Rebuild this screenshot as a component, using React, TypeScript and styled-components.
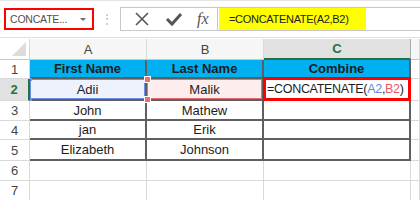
import styled, { createGlobalStyle } from 'styled-components';

const GlobalStyle = createGlobalStyle`
    html, body {
        margin: 0;
        padding: 0;
        background: #ffffff;
        font-family: "Liberation Sans", Arial, sans-serif;
    }
`;

const gridLine = '#d9d9d9';
const tableLine = '#5f5f5f';

type CellKind = 'plain' | 'head' | 'body' | 'sel-a' | 'sel-b' | 'formula';

interface Row {
    num: number;
    height: number;
    cells: [string, string, string];
}

const rows: Row[] = [
    { num: 1, height: 19, cells: ['First Name', 'Last Name', 'Combine'] },
    { num: 2, height: 22, cells: ['Adii', 'Malik', ''] },
    { num: 3, height: 20, cells: ['John', 'Mathew', ''] },
    { num: 4, height: 19, cells: ['jan', 'Erik', ''] },
    { num: 5, height: 21, cells: ['Elizabeth', 'Johnson', ''] },
    { num: 6, height: 20, cells: ['', '', ''] },
    { num: 7, height: 20, cells: ['', '', ''] },
];

function kindsFor(num: number): CellKind[] {
    if (num === 1) return ['head', 'head', 'head'];
    if (num === 2) return ['sel-a', 'sel-b', 'formula'];
    if (num <= 5) return ['body', 'body', 'body'];
    return ['plain', 'plain', 'plain'];
}

export default function App(): JSX.Element {
    return (
        <>
            <GlobalStyle />
            <Page>
                <FormulaRow>
                    <NameBox>
                        <NameText>CONCATE...</NameText>
                        <Caret />
                    </NameBox>
                    <Dots>⋮</Dots>
                    <IconBox>
                        <svg width="18" height="18" viewBox="0 0 18 18">
                            <path d="M3 3 L15 15 M15 3 L3 15" stroke="#555" strokeWidth="1.6" fill="none" />
                        </svg>
                        <svg width="20" height="18" viewBox="0 0 20 18">
                            <path d="M3 9 L8 14 L17 4" stroke="#555" strokeWidth="3" fill="none" />
                        </svg>
                        <Fx>fx</Fx>
                    </IconBox>
                    <FormulaInput>
                        <FormulaText>=CONCATENATE(A2,B2)</FormulaText>
                    </FormulaInput>
                </FormulaRow>

                <Sheet>
                    <HeaderRow>
                        <Corner>
                            <svg width="14" height="14" viewBox="0 0 14 14">
                                <path d="M14 0 L14 14 L0 14 Z" fill="#dcdcdc" />
                            </svg>
                        </Corner>
                        <ColHead>A</ColHead>
                        <ColHead>B</ColHead>
                        <ColHead active>C</ColHead>
                        <ColHead />
                    </HeaderRow>

                    {rows.map((row) => {
                        const kinds = kindsFor(row.num);
                        return (
                            <SheetRow key={row.num} style={{ height: row.height }}>
                                <RowHead active={row.num === 2}>{row.num}</RowHead>
                                {row.cells.map((text, i) => (
                                    <Cell key={i} kind={kinds[i]}>
                                        {kinds[i] === 'formula' ? (
                                            <Formula>
                                                =CONCATENATE(<RefA>A2</RefA>,<RefB>B2</RefB>)
                                            </Formula>
                                        ) : text}
                                        {kinds[i] === 'sel-a' && (
                                            <>
                                                <Tick side="top" />
                                                <Tick side="bottom" />
                                            </>
                                        )}
                                        {kinds[i] === 'sel-b' && (
                                            <>
                                                <Handle side="top" />
                                                <Handle side="bottom" />
                                            </>
                                        )}
                                    </Cell>
                                ))}
                                <Cell kind="plain" />
                            </SheetRow>
                        );
                    })}
                </Sheet>
            </Page>
        </>
    );
}

const Page = styled.div`
    width: 420px;
    height: 200px;
    overflow: hidden;
    background: #ffffff;
    border-top: 1px solid #e4e4e4;
    box-sizing: border-box;
`;

const FormulaRow = styled.div`
    height: 37px;
    display: flex;
    align-items: center;
    padding-left: 4px;
    box-sizing: border-box;
    border-bottom: 1px solid #e0e0e0;
`;

const NameBox = styled.div`
    width: 90px;
    height: 22px;
    border: 2px solid #ff0000;
    box-sizing: border-box;
    display: flex;
    align-items: center;
    justify-content: space-between;
    padding: 0 6px 0 4px;
`;

const NameText = styled.span`
    font-size: 10.5px;
    color: #505050;
    letter-spacing: -0.2px;
`;

const Caret = styled.span`
    width: 0;
    height: 0;
    border-left: 3px solid transparent;
    border-right: 3px solid transparent;
    border-top: 3px solid #6a6a6a;
`;

const Dots = styled.span`
    width: 26px;
    text-align: center;
    color: #b8b8b8;
    font-size: 12px;
`;

const IconBox = styled.div`
    width: 97px;
    height: 24px;
    border: 1px solid #c8c8c8;
    border-right: none;
    box-sizing: border-box;
    display: flex;
    align-items: center;
    justify-content: space-around;
    padding: 0 2px 0 6px;
`;

const Fx = styled.span`
    font-family: "Liberation Serif", "Times New Roman", serif;
    font-style: italic;
    font-size: 16px;
    color: #555;
`;

const FormulaInput = styled.div`
    flex: 1;
    height: 24px;
    border: 1px solid #c8c8c8;
    border-right: none;
    box-sizing: border-box;
    display: flex;
    align-items: stretch;
    padding: 0 0 0 1px;
`;

const FormulaText = styled.span`
    background: #ffff00;
    width: 147px;
    display: flex;
    align-items: center;
    padding-left: 10px;
    box-sizing: border-box;
    font-size: 11px;
    letter-spacing: -0.3px;
    color: #222;
`;

const Sheet = styled.div`
    display: flex;
    flex-direction: column;
    width: 420px;
    padding-top: 1px;
`;

const SheetRow = styled.div`
    display: grid;
    grid-template-columns: 30px 117px 117px 147px 1fr;
    width: 420px;
`;

const HeaderRow = styled(SheetRow)`
    height: 21px;
`;

const Corner = styled.div`
    box-sizing: border-box;
    background: #ffffff;
    border-right: 1px solid ${gridLine};
    border-bottom: 1px solid #c6c6c6;
    display: flex;
    align-items: flex-end;
    justify-content: flex-end;
    padding: 0 3px 3px 0;
`;

const ColHead = styled.div<{ active?: boolean }>`
    box-sizing: border-box;
    background: ${(p) => (p.active ? '#e1e1e1' : '#f6f6f6')};
    border-right: 1px solid ${(p) => (p.active ? '#ababab' : gridLine)};
    border-bottom: ${(p) => (p.active ? '2px solid #217346' : '1px solid #c6c6c6')};
    color: ${(p) => (p.active ? '#217346' : '#444')};
    font-weight: ${(p) => (p.active ? 'bold' : 'normal')};
    font-size: 13px;
    display: flex;
    align-items: center;
    justify-content: center;
`;

const RowHead = styled.div<{ active?: boolean }>`
    box-sizing: border-box;
    background: ${(p) => (p.active ? '#e1e1e1' : '#ffffff')};
    border-right: ${(p) => (p.active ? '2px solid #217346' : `1px solid ${gridLine}`)};
    border-bottom: 1px solid ${gridLine};
    color: ${(p) => (p.active ? '#217346' : '#444')};
    font-weight: ${(p) => (p.active ? 'bold' : 'normal')};
    font-size: 13px;
    display: flex;
    align-items: center;
    justify-content: center;
`;

const cellBg: Record<CellKind, string> = {
    plain: '#ffffff',
    head: '#00b0f0',
    body: '#ffffff',
    'sel-a': '#eef2fc',
    'sel-b': '#fdeded',
    formula: '#ffffff',
};

const Cell = styled.div<{ kind: CellKind }>`
    position: relative;
    box-sizing: border-box;
    background: ${(p) => cellBg[p.kind]};
    border-right: ${(p) => (p.kind === 'plain' ? `1px solid ${gridLine}` : `2px solid ${tableLine}`)};
    border-bottom: ${(p) => (p.kind === 'plain' ? `1px solid ${gridLine}` : `2px solid ${tableLine}`)};
    box-shadow: ${(p) =>
        p.kind === 'sel-a' ? 'inset 0 0 0 1px #6d8fe8'
            : p.kind === 'sel-b' ? 'inset 0 0 0 1px #ec6f76'
                : 'none'};
    font-size: 13px;
    font-weight: ${(p) => (p.kind === 'head' ? 'bold' : 'normal')};
    color: #1c1c1c;
    display: flex;
    align-items: center;
    justify-content: center;
    white-space: nowrap;
`;

const Formula = styled.div`
    position: absolute;
    left: -1px;
    top: -2px;
    right: -2px;
    bottom: -2px;
    border: 3px solid #ff0000;
    background: #ffffff;
    display: flex;
    align-items: center;
    padding-left: 1px;
    font-size: 12.5px;
    letter-spacing: -0.3px;
    color: #1c1c1c;
    z-index: 2;
`;

const RefA = styled.span`
    color: #5a8ae6;
`;

const RefB = styled.span`
    color: #e8585f;
`;

const Handle = styled.span<{ side: 'top' | 'bottom' }>`
    position: absolute;
    left: -3px;
    ${(p) => (p.side === 'top' ? 'top: -3px;' : 'bottom: -4px;')}
    width: 5px;
    height: 5px;
    background: #ec6f76;
    border: 1px solid #ffffff;
    z-index: 3;
`;

const Tick = styled.span<{ side: 'top' | 'bottom' }>`
    position: absolute;
    left: 0;
    ${(p) => (p.side === 'top' ? 'top: -1px;' : 'bottom: -2px;')}
    width: 2px;
    height: 3px;
    background: #6d8fe8;
    z-index: 3;
`;
